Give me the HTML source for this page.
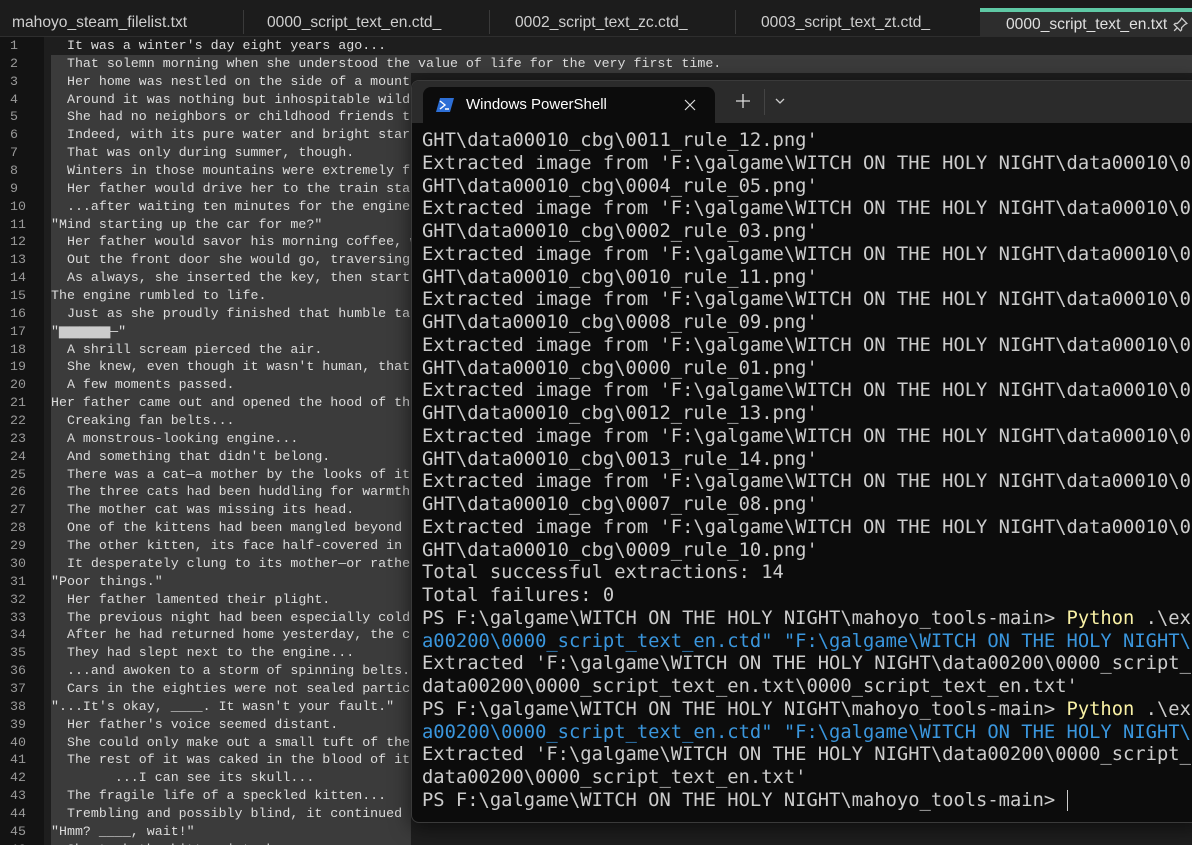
<!DOCTYPE html>
<html style="overflow:hidden"><head><meta charset="utf-8"><style>
*{margin:0;padding:0;box-sizing:border-box}
html,body{width:1192px;height:845px;overflow:hidden}
body{background:#1e1e1e;position:relative;font-family:"Liberation Sans",sans-serif}
#top{position:absolute;left:0;top:0;width:1192px;height:37px;background:#1c1c1c;border-bottom:1px solid #2e2e2e}
.tab{position:absolute;top:9px;height:27px;color:#cfcfcf;font-size:15.6px;line-height:27px;padding-left:12px}
.sep{position:absolute;top:10px;width:1px;height:24px;background:#3a3a3a}
#active{position:absolute;left:980px;top:8px;width:212px;height:29px;background:#2d2d2d;border-top:4px solid #5fc9a5}
#gut{position:absolute;left:0;top:37px;width:44px;height:808px;background:#131313}
#ed{position:absolute;left:0;top:37px;width:1192px;height:808px;overflow:hidden;font-family:"Liberation Mono",monospace;font-size:13.3px;line-height:17.87px;color:#dcdcdc}
.l{position:relative;height:17.87px;white-space:pre}
.l .n{position:absolute;left:10px;width:30px;color:#9a9a9a}
.l .t{position:absolute;left:51px;width:360px;overflow:hidden}
.l.w .t{width:auto;right:0}
.s .t{background:#3b3b3b}
#term{position:absolute;left:411px;top:80px;width:790px;height:743px;background:#0c0c0c;border:1px solid #3a3a3a;border-radius:8px 0 0 8px;overflow:hidden;box-shadow:0 4px 20px rgba(0,0,0,.6)}
#tbar{position:absolute;left:0;top:0;right:0;height:42px;background:#2b2b2b}
#ttab{position:absolute;left:11px;top:6px;width:292px;height:36px;background:#0c0c0c;border-radius:8px 8px 0 0}
#tc{position:absolute;left:10px;top:49px;font-family:"DejaVu Sans Mono","Liberation Mono",monospace;font-size:18.8px;line-height:22.75px;color:#cccccc;white-space:pre}
.y{color:#f9f1a5}.b{color:#3a96dd}
</style></head><body>
<div id="top">
<div class="tab" style="left:0">mahoyo_steam_filelist.txt</div>
<div class="sep" style="left:243px"></div>
<div class="tab" style="left:255px">0000_script_text_en.ctd_</div>
<div class="sep" style="left:489px"></div>
<div class="tab" style="left:503px">0002_script_text_zc.ctd_</div>
<div class="sep" style="left:735px"></div>
<div class="tab" style="left:749px">0003_script_text_zt.ctd_</div>
<div id="active"><div style="position:absolute;left:26px;top:0;color:#e0e0e0;font-size:15.6px;line-height:25px">0000_script_text_en.txt</div>
<svg style="position:absolute;left:192px;top:4px" width="17" height="17" viewBox="0 0 16 16" fill="none" stroke="#ccc" stroke-width="1.2"><path d="M9 2l5 5-2 1-3 3v2l-1 1-6-6 1-1h2l3-3z M5 11l-3 3"/></svg></div>
</div>
<div id="gut"></div>
<div id="ed">
<div class="l w"><span class="n">1</span><span class="t" style="background:none">  It was a winter's day eight years ago...</span></div>
<div class="l s w"><span class="n">2</span><span class="t">  That solemn morning when she understood the value of life for the very first time.</span></div>
<div class="l s"><span class="n">3</span><span class="t">  Her home was nestled on the side of a mountain</span></div>
<div class="l s"><span class="n">4</span><span class="t">  Around it was nothing but inhospitable wilderness</span></div>
<div class="l s"><span class="n">5</span><span class="t">  She had no neighbors or childhood friends to</span></div>
<div class="l s"><span class="n">6</span><span class="t">  Indeed, with its pure water and bright stars</span></div>
<div class="l s"><span class="n">7</span><span class="t">  That was only during summer, though.</span></div>
<div class="l s"><span class="n">8</span><span class="t">  Winters in those mountains were extremely fierce</span></div>
<div class="l s"><span class="n">9</span><span class="t">  Her father would drive her to the train station</span></div>
<div class="l s"><span class="n">10</span><span class="t">  ...after waiting ten minutes for the engine</span></div>
<div class="l s"><span class="n">11</span><span class="t">"Mind starting up the car for me?"</span></div>
<div class="l s"><span class="n">12</span><span class="t">  Her father would savor his morning coffee, while</span></div>
<div class="l s"><span class="n">13</span><span class="t">  Out the front door she would go, traversing</span></div>
<div class="l s"><span class="n">14</span><span class="t">  As always, she inserted the key, then started</span></div>
<div class="l s"><span class="n">15</span><span class="t">The engine rumbled to life.</span></div>
<div class="l s"><span class="n">16</span><span class="t">  Just as she proudly finished that humble task</span></div>
<div class="l s"><span class="n">17</span><span class="t">"<span style="color:#ccc">▆▆▆▆▆</span>—"</span></div>
<div class="l s"><span class="n">18</span><span class="t">  A shrill scream pierced the air.</span></div>
<div class="l s"><span class="n">19</span><span class="t">  She knew, even though it wasn't human, that it</span></div>
<div class="l s"><span class="n">20</span><span class="t">  A few moments passed.</span></div>
<div class="l s"><span class="n">21</span><span class="t">Her father came out and opened the hood of the</span></div>
<div class="l s"><span class="n">22</span><span class="t">  Creaking fan belts...</span></div>
<div class="l s"><span class="n">23</span><span class="t">  A monstrous-looking engine...</span></div>
<div class="l s"><span class="n">24</span><span class="t">  And something that didn't belong.</span></div>
<div class="l s"><span class="n">25</span><span class="t">  There was a cat—a mother by the looks of it</span></div>
<div class="l s"><span class="n">26</span><span class="t">  The three cats had been huddling for warmth</span></div>
<div class="l s"><span class="n">27</span><span class="t">  The mother cat was missing its head.</span></div>
<div class="l s"><span class="n">28</span><span class="t">  One of the kittens had been mangled beyond</span></div>
<div class="l s"><span class="n">29</span><span class="t">  The other kitten, its face half-covered in</span></div>
<div class="l s"><span class="n">30</span><span class="t">  It desperately clung to its mother—or rather</span></div>
<div class="l s"><span class="n">31</span><span class="t">"Poor things."</span></div>
<div class="l s"><span class="n">32</span><span class="t">  Her father lamented their plight.</span></div>
<div class="l s"><span class="n">33</span><span class="t">  The previous night had been especially cold</span></div>
<div class="l s"><span class="n">34</span><span class="t">  After he had returned home yesterday, the cats</span></div>
<div class="l s"><span class="n">35</span><span class="t">  They had slept next to the engine...</span></div>
<div class="l s"><span class="n">36</span><span class="t">  ...and awoken to a storm of spinning belts.</span></div>
<div class="l s"><span class="n">37</span><span class="t">  Cars in the eighties were not sealed particularly</span></div>
<div class="l s"><span class="n">38</span><span class="t">"...It's okay, ____. It wasn't your fault."</span></div>
<div class="l s"><span class="n">39</span><span class="t">  Her father's voice seemed distant.</span></div>
<div class="l s"><span class="n">40</span><span class="t">  She could only make out a small tuft of the</span></div>
<div class="l s"><span class="n">41</span><span class="t">  The rest of it was caked in the blood of its</span></div>
<div class="l s"><span class="n">42</span><span class="t">        ...I can see its skull...</span></div>
<div class="l s"><span class="n">43</span><span class="t">  The fragile life of a speckled kitten...</span></div>
<div class="l s"><span class="n">44</span><span class="t">  Trembling and possibly blind, it continued</span></div>
<div class="l s"><span class="n">45</span><span class="t">"Hmm? ____, wait!"</span></div>
<div class="l s"><span class="n">46</span><span class="t">  She took the kitten into her</span></div>
</div>
<div id="term">
<div id="tbar"><div id="ttab">
<svg style="position:absolute;left:13px;top:10px" width="18" height="16" viewBox="0 0 18 16"><path d="M4 1h14l-4 14H0z" fill="#2d6fd6"/><path d="M4 4l5 4-5 4M9 12h4" stroke="#fff" stroke-width="1.4" fill="none"/></svg>
<div style="position:absolute;left:43px;top:8px;color:#fff;font-size:15px;line-height:20px">Windows PowerShell</div>
<svg style="position:absolute;left:261px;top:12px" width="12" height="12"><path d="M1 1l10 10M11 1L1 11" stroke="#ddd" stroke-width="1.2"/></svg>
</div>
<svg style="position:absolute;left:324px;top:13px" width="14" height="14"><path d="M7 0v14M0 7h14" stroke="#ddd" stroke-width="1.3"/></svg>
<div style="position:absolute;left:352px;top:8px;width:1px;height:26px;background:#444"></div>
<svg style="position:absolute;left:363px;top:17px" width="10" height="7"><path d="M1 1l4 4 4-4" stroke="#ccc" fill="none" stroke-width="1.3"/></svg>
</div>
<div id="tc">GHT\data00010_cbg\0011_rule_12.png'
Extracted image from 'F:\galgame\WITCH ON THE HOLY NIGHT\data00010\0
GHT\data00010_cbg\0004_rule_05.png'
Extracted image from 'F:\galgame\WITCH ON THE HOLY NIGHT\data00010\0
GHT\data00010_cbg\0002_rule_03.png'
Extracted image from 'F:\galgame\WITCH ON THE HOLY NIGHT\data00010\0
GHT\data00010_cbg\0010_rule_11.png'
Extracted image from 'F:\galgame\WITCH ON THE HOLY NIGHT\data00010\0
GHT\data00010_cbg\0008_rule_09.png'
Extracted image from 'F:\galgame\WITCH ON THE HOLY NIGHT\data00010\0
GHT\data00010_cbg\0000_rule_01.png'
Extracted image from 'F:\galgame\WITCH ON THE HOLY NIGHT\data00010\0
GHT\data00010_cbg\0012_rule_13.png'
Extracted image from 'F:\galgame\WITCH ON THE HOLY NIGHT\data00010\0
GHT\data00010_cbg\0013_rule_14.png'
Extracted image from 'F:\galgame\WITCH ON THE HOLY NIGHT\data00010\0
GHT\data00010_cbg\0007_rule_08.png'
Extracted image from 'F:\galgame\WITCH ON THE HOLY NIGHT\data00010\0
GHT\data00010_cbg\0009_rule_10.png'
Total successful extractions: 14
Total failures: 0
PS F:\galgame\WITCH ON THE HOLY NIGHT\mahoyo_tools-main> <span class="y">Python</span> .\ex
<span class="b">a00200\0000_script_text_en.ctd" "F:\galgame\WITCH ON THE HOLY NIGHT\</span>
Extracted 'F:\galgame\WITCH ON THE HOLY NIGHT\data00200\0000_script_
data00200\0000_script_text_en.txt\0000_script_text_en.txt'
PS F:\galgame\WITCH ON THE HOLY NIGHT\mahoyo_tools-main> <span class="y">Python</span> .\ex
<span class="b">a00200\0000_script_text_en.ctd" "F:\galgame\WITCH ON THE HOLY NIGHT\</span>
Extracted 'F:\galgame\WITCH ON THE HOLY NIGHT\data00200\0000_script_
data00200\0000_script_text_en.txt'
PS F:\galgame\WITCH ON THE HOLY NIGHT\mahoyo_tools-main> <span style="border-left:1px solid #ccc"> </span></div>
</div>
</body></html>
